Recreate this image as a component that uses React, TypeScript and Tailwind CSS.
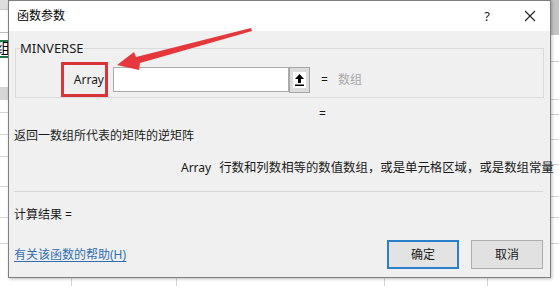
import React from "react";

function LeftStrip() {
  return (
    <div className="flex w-[8px] flex-col">
      <div className="h-[10px] bg-[#dedede] border-b border-[#c8c8c8]" />
      <div className="h-[23px] bg-white border-b border-[#bdbdbd]" />
      <div className="h-[7px] bg-white" />
      <div className="relative h-[18px] overflow-hidden border-y-2 border-[#217346] bg-white">
        <span className="absolute right-[-2px] top-[-2px] text-[14px] leading-[16px] text-black">组</span>
      </div>
      <div className="h-[30px] bg-white border-b border-[#d4d4d4]" />
      <div className="h-[12px] bg-[#d6d6d6]" />
      <div className="h-[13px] bg-white border-b border-[#d4d4d4]" />
      <div className="h-[22px] bg-white border-b border-[#d4d4d4]" />
      <div className="h-[22px] bg-white border-b border-[#d4d4d4]" />
      <div className="h-[30px] bg-white border-b border-[#d4d4d4]" />
      <div className="h-[31px] bg-white border-b border-[#d4d4d4]" />
      <div className="h-[26px] bg-white border-b border-[#d4d4d4]" />
      <div className="flex-1 bg-white" />
    </div>
  );
}

function RightStrip() {
  return (
    <div className="flex w-[8px] flex-col">
      <div className="h-[35px] bg-[#c4c4c4]" />
      <div className="h-[27px] bg-white border-b border-[#d0d0d0]" />
      <div className="h-[38px] bg-white border-b border-[#d0d0d0]" />
      <div className="h-[15px] bg-white border-b border-[#d0d0d0]" />
      <div className="h-[25px] bg-white border-b border-[#d0d0d0]" />
      <div className="h-[25px] bg-white border-b border-[#d0d0d0]" />
      <div className="h-[32px] bg-white border-b border-[#d0d0d0]" />
      <div className="h-[21px] bg-white border-b border-[#d0d0d0]" />
      <div className="h-[26px] bg-white border-b border-[#d0d0d0]" />
      <div className="flex-1 bg-white" />
    </div>
  );
}

function UploadIcon() {
  return (
    <svg width="13" height="16" viewBox="0 0 13 16">
      <rect x="0" y="0" width="13" height="16" fill="#ffffff" />
      <path d="M6.5 2 L11 7 L8 7 L8 11 L5 11 L5 7 L2 7 Z" fill="#000" />
      <rect x="2" y="12.5" width="9" height="1.5" fill="#000" />
    </svg>
  );
}

export default function App() {
  return (
    <div className="relative h-[286px] w-[559px] overflow-hidden bg-white font-['Noto_Sans','Noto_Sans_CJK_SC',sans-serif] text-[12px] text-[#1a1a1a]">
      {/* Excel backdrop */}
      <div className="flex h-full w-full">
        <LeftStrip />
        <div className="flex flex-1 flex-col">
          <div className="h-[278px]" />
          <div className="flex flex-1 bg-white">
            <div className="w-[64px] border-r border-[#d4d4d4]" />
            <div className="w-[105px] border-r border-[#d4d4d4]" />
            <div className="w-[208px] border-r border-[#d4d4d4]" />
            <div className="w-[103px] border-r border-[#d4d4d4]" />
          </div>
        </div>
        <RightStrip />
      </div>

      {/* Dialog */}
      <div className="absolute left-[8px] top-0 flex h-[278px] w-[543px] flex-col border border-[#7f7f7f] shadow-[1px_1px_3px_rgba(0,0,0,0.25)]">
        {/* title bar */}
        <div className="flex h-[30px] items-center bg-white pl-[8px] pr-[14px]">
          <span className="text-[12px] leading-[16px] text-black">函数参数</span>
          <div className="flex-1" />
          <span className="mr-[34px] text-[13px] leading-[16px] text-[#222]">?</span>
          <svg width="12" height="12" viewBox="0 0 12 12">
            <path d="M1 1 L11 11 M11 1 L1 11" stroke="#222" strokeWidth="1.1" />
          </svg>
        </div>

        {/* body */}
        <div className="flex flex-1 flex-col bg-[#f0f0f0]">
          {/* group box */}
          <div className="relative ml-[6px] mt-[17px] h-[50px] w-[529px] border border-[#dadada]">
            <span className="absolute left-[4px] top-[-8px] bg-[#f0f0f0] text-[13px] leading-[14px] text-[#1a1a1a]">
              MINVERSE
            </span>
            <div className="flex items-center pl-[45px] pt-[13px]">
              <div className="flex h-[35px] w-[47px] items-center justify-end border-[3px] border-[#d8353b] pr-[1px]">
                <span className="text-[12px] leading-[16px]">Array</span>
              </div>
              <div className="ml-[5px] h-[25px] w-[176px] border border-[#ababab] bg-white" />
              <div className="flex h-[26px] w-[21px] items-center justify-center border border-[#a6a6a6] bg-[#dcdcdc]">
                <UploadIcon />
              </div>
              <span className="ml-[11px] text-[12px] leading-[16px]">=</span>
              <span className="ml-[10px] text-[12px] leading-[16px] text-[#a8a8a8]">数组</span>
            </div>
          </div>

          <div className="mt-[8px] h-[16px] pl-[310px] text-[12px] leading-[16px]">=</div>
          <div className="mt-[6px] h-[16px] pl-[5px] text-[12px] leading-[16px]">返回一数组所代表的矩阵的逆矩阵</div>
          <div className="mt-[16px] flex h-[16px] whitespace-nowrap pl-[172px] text-[12px] leading-[16px]">
            <span>Array</span>
            <span className="ml-[8px] text-[12.4px]">行数和列数相等的数值数组，或是单元格区域，或是数组常量</span>
          </div>
          <div className="ml-[5px] mt-[15px] h-px w-[529px] bg-[#d9d9d9]" />
          <div className="mt-[15px] h-[16px] pl-[5px] text-[12px] leading-[16px]">计算结果 =</div>

          <div className="mt-[17px] flex items-center pl-[5px] pr-[7px]">
            <a className="text-[12px] leading-[16px] text-[#2f6fb3] underline underline-offset-2">有关该函数的帮助(H)</a>
            <div className="flex-1" />
            <div className="flex h-[29px] w-[72px] items-center justify-center border-2 border-[#2b7fc9] bg-[#e3e3e3]">
              <span className="text-[12px] leading-[16px]">确定</span>
            </div>
            <div className="ml-[12px] flex h-[29px] w-[72px] items-center justify-center border border-[#adadad] bg-[#e1e1e1]">
              <span className="text-[12px] leading-[16px]">取消</span>
            </div>
          </div>
        </div>
      </div>

      {/* Red annotation arrow */}
      <svg className="pointer-events-none absolute left-0 top-0" width="559" height="286" viewBox="0 0 559 286">
        <polygon
          points="117,65 134,52 136,57 251,28 252,31 140,63 139,70"
          fill="#e6373c"
        />
      </svg>
    </div>
  );
}
